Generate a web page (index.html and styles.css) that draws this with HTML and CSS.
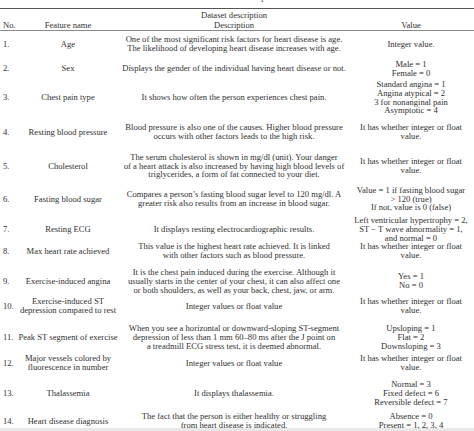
FILE: index.html
```html
<!DOCTYPE html>
<html>
<head>
<meta charset="utf-8">
<link rel="stylesheet" href="styles.css">
</head>
<body>
<div class="page">
  <div class="caption-clip"><div class="caption">Table 1: Dataset description.</div></div>
  <div class="rule-top"></div>
  <div class="row head1"><div></div><div></div><div class="c">Dataset description</div><div></div></div>
  <div class="row head2"><div class="n">No.</div><div class="c">Feature name</div><div class="c">Description</div><div class="c">Value</div></div>
  <div class="rule-mid"></div>

  <div class="row r1">
    <div class="n">1.</div><div class="c">Age</div>
    <div class="c"><span>One of the most significant risk factors for heart disease is age.</span><span>The likelihood of developing heart disease increases with age.</span></div>
    <div class="c">Integer value.</div>
  </div>
  <div class="row r2">
    <div class="n">2.</div><div class="c">Sex</div>
    <div class="c">Displays the gender of the individual having heart disease or not.</div>
    <div class="c"><span>Male = 1</span><span>Female = 0</span></div>
  </div>
  <div class="row r3">
    <div class="n">3.</div><div class="c">Chest pain type</div>
    <div class="c">It shows how often the person experiences chest pain.</div>
    <div class="c"><span>Standard angina = 1</span><span>Angina atypical = 2</span><span>3 for nonanginal pain</span><span>Asymptotic = 4</span></div>
  </div>
  <div class="row r4">
    <div class="n">4.</div><div class="c">Resting blood pressure</div>
    <div class="c"><span>Blood pressure is also one of the causes. Higher blood pressure</span><span>occurs with other factors leads to the high risk.</span></div>
    <div class="c"><span>It has whether integer or float</span><span>value.</span></div>
  </div>
  <div class="row r5">
    <div class="n">5.</div><div class="c">Cholesterol</div>
    <div class="c"><span>The serum cholesterol is shown in mg/dl (unit). Your danger</span><span>of a heart attack is also increased by having high blood levels of</span><span>triglycerides, a form of fat connected to your diet.</span></div>
    <div class="c"><span>It has whether integer or float</span><span>value.</span></div>
  </div>
  <div class="row r6">
    <div class="n">6.</div><div class="c">Fasting blood sugar</div>
    <div class="c"><span>Compares a person’s fasting blood sugar level to 120 mg/dl. A</span><span>greater risk also results from an increase in blood sugar.</span></div>
    <div class="c"><span>Value = 1 if fasting blood sugar</span><span>&gt; 120 (true)</span><span>If not, value is 0 (false)</span></div>
  </div>
  <div class="row r7">
    <div class="n">7.</div><div class="c">Resting ECG</div>
    <div class="c">It displays resting electrocardiographic results.</div>
    <div class="c"><span>Left ventricular hypertrophy = 2,</span><span>ST − T wave abnormality = 1,</span><span>and normal = 0</span></div>
  </div>
  <div class="row r8">
    <div class="n">8.</div><div class="c">Max heart rate achieved</div>
    <div class="c"><span>This value is the highest heart rate achieved. It is linked</span><span>with other factors such as blood pressure.</span></div>
    <div class="c"><span>It has whether integer or float</span><span>value.</span></div>
  </div>
  <div class="row r9">
    <div class="n">9.</div><div class="c">Exercise-induced angina</div>
    <div class="c"><span>It is the chest pain induced during the exercise. Although it</span><span>usually starts in the center of your chest, it can also affect one</span><span>or both shoulders, as well as your back, chest, jaw, or arm.</span></div>
    <div class="c"><span>Yes = 1</span><span>No = 0</span></div>
  </div>
  <div class="row r10">
    <div class="n">10.</div><div class="c"><span>Exercise-induced ST</span><span>depression compared to rest</span></div>
    <div class="c">Integer values or float value</div>
    <div class="c"><span>It has whether integer or float</span><span>value.</span></div>
  </div>
  <div class="row r11">
    <div class="n">11.</div><div class="c">Peak ST segment of exercise</div>
    <div class="c"><span>When you see a horizontal or downward-sloping ST-segment</span><span>depression of less than 1 mm 60–80 ms after the J point on</span><span>a treadmill ECG stress test, it is deemed abnormal.</span></div>
    <div class="c"><span>Upsloping = 1</span><span>Flat = 2</span><span>Downsloping = 3</span></div>
  </div>
  <div class="row r12">
    <div class="n">12.</div><div class="c"><span>Major vessels colored by</span><span>fluorescence in number</span></div>
    <div class="c">Integer values or float value</div>
    <div class="c"><span>It has whether integer or float</span><span>value.</span></div>
  </div>
  <div class="row r13">
    <div class="n">13.</div><div class="c">Thalassemia</div>
    <div class="c">It displays thalassemia.</div>
    <div class="c"><span>Normal = 3</span><span>Fixed defect = 6</span><span>Reversible defect = 7</span></div>
  </div>
  <div class="row r14">
    <div class="n">14.</div><div class="c">Heart disease diagnosis</div>
    <div class="c"><span>The fact that the person is either healthy or struggling</span><span>from heart disease is indicated.</span></div>
    <div class="c"><span>Absence = 0</span><span>Present = 1, 2, 3, 4</span></div>
  </div>
</div>
</body>
</html>
```

FILE: styles.css
```css
html, body {
  margin: 0;
  padding: 0;
  background: #ffffff;
  overflow: hidden;
}

.page {
  width: 474px;
  height: 431px;
  overflow: hidden;
  font-family: "Liberation Serif", "Times New Roman", serif;
  font-size: 8.6px;
  line-height: 8.8px;
  color: #303030;
  background: linear-gradient(to bottom, #ffffff 428px, #e8e8e8 428px);
}

.caption-clip {
  height: 3px;
  overflow: hidden;
}

.caption {
  margin-top: -7px;
  line-height: 8.6px;
  text-align: center;
  white-space: nowrap;
  padding-right: 10px;
}

.rule-top {
  margin-top: 5px;
  height: 1px;
  background: #555555;
}

.rule-mid {
  height: 1px;
  background: #8a8a8a;
}

.row {
  display: grid;
  grid-template-columns: 18px 100px 232px 122px;
}

.row > div {
  display: flex;
  flex-direction: column;
  justify-content: center;
  white-space: nowrap;
  min-width: 0;
}

.row .c {
  align-items: center;
  text-align: center;
}

.row .n {
  align-items: flex-start;
  padding-left: 3px;
}

.head1 { height: 12px; }
.head2 { height: 9px; }

.r1 { height: 26px; }
.r2 { height: 23px; }
.r3 { height: 34px; }
.r4 { height: 36px; }
.r5 { height: 32px; }
.r6 { height: 34px; }
.r7 { height: 18px; }
.r8 { height: 34px; }
.r9 { height: 20px; }
.r10 { height: 36px; }
.r11 { height: 22px; }
.r12 { height: 34px; }
.r13 { height: 21px; }
.r14 { height: 40px; }
```
